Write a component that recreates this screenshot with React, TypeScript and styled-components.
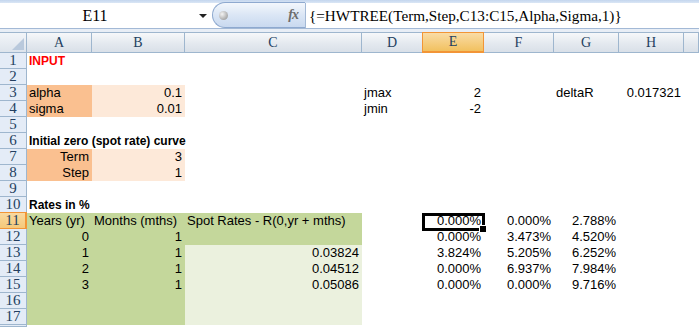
import styled, { createGlobalStyle, css } from 'styled-components'

const GlobalStyle = createGlobalStyle`
  html, body {
    margin: 0;
    padding: 0;
    background: #fff;
  }
  body {
    width: 699px;
    height: 327px;
    overflow: hidden;
    font-family: "Liberation Sans", Arial, sans-serif;
  }
`

const ORANGE = '#fac090'
const PEACH = '#fde9d9'
const GREEN = '#c4d79b'
const PALE = '#ebf1de'

type CellData = {
    v?: string
    right?: boolean
    bold?: boolean
    color?: string
    bg?: string
    selected?: boolean
}

const COLS: { id: string; w: number }[] = [
    { id: 'A', w: 65 },
    { id: 'B', w: 93 },
    { id: 'C', w: 177 },
    { id: 'D', w: 61 },
    { id: 'E', w: 61 },
    { id: 'F', w: 70 },
    { id: 'G', w: 65 },
    { id: 'H', w: 65 },
]

const ROW_COUNT = 17
const ACTIVE_COL = 'E'
const ACTIVE_ROW = 11

const n = (v: string, bg?: string): CellData => ({ v, right: true, bg })

const SHEET: Record<number, Record<string, CellData>> = {
    1: { A: { v: 'INPUT', bold: true, color: '#ff0000' } },
    3: {
        A: { v: 'alpha', bg: ORANGE },
        B: n('0.1', PEACH),
        D: { v: 'jmax' },
        E: n('2'),
        G: { v: 'deltaR' },
        H: n('0.017321'),
    },
    4: {
        A: { v: 'sigma', bg: ORANGE },
        B: n('0.01', PEACH),
        D: { v: 'jmin' },
        E: n('-2'),
    },
    6: { A: { v: 'Initial zero (spot rate) curve', bold: true } },
    7: { A: n('Term', ORANGE), B: n('3', PEACH) },
    8: { A: n('Step', ORANGE), B: n('1', PEACH) },
    10: { A: { v: 'Rates in %', bold: true } },
    11: {
        A: { v: 'Years (yr)', bg: GREEN },
        B: { v: 'Months (mths)', bg: GREEN },
        C: { v: 'Spot Rates - R(0,yr + mths)', bg: GREEN },
        E: { ...n('0.000%'), selected: true },
        F: n('0.000%'),
        G: n('2.788%'),
    },
    12: { A: n('0', GREEN), B: n('1', GREEN), C: { bg: GREEN }, E: n('0.000%'), F: n('3.473%'), G: n('4.520%') },
    13: { A: n('1', GREEN), B: n('1', GREEN), C: n('0.03824', PALE), E: n('3.824%'), F: n('5.205%'), G: n('6.252%') },
    14: { A: n('2', GREEN), B: n('1', GREEN), C: n('0.04512', PALE), E: n('0.000%'), F: n('6.937%'), G: n('7.984%') },
    15: { A: n('3', GREEN), B: n('1', GREEN), C: n('0.05086', PALE), E: n('0.000%'), F: n('0.000%'), G: n('9.716%') },
    16: { A: { bg: GREEN }, B: { bg: GREEN }, C: { bg: PALE } },
    17: { A: { bg: GREEN }, B: { bg: GREEN }, C: { bg: PALE } },
}

/* ---------- formula bar ---------- */

const TopStrip = styled.div`
    height: 3px;
    background: linear-gradient(#c4d6ee, #dae6f5);
`
const FormulaBar = styled.div`
    height: 25px;
    display: flex;
    background: #fff;
    border-bottom: 1px solid #a3b9d6;
`
const NameBox = styled.div`
    width: 212px;
    display: flex;
    align-items: center;
`
const NameText = styled.span`
    width: 190px;
    text-align: center;
    font-family: "Liberation Serif", "Times New Roman", serif;
    font-size: 16px;
    color: #000;
`
const DropArrow = styled.span`
    width: 0;
    height: 0;
    margin-left: 9px;
    border-left: 4px solid transparent;
    border-right: 4px solid transparent;
    border-top: 4px solid #222;
`
const FxPill = styled.div`
    width: 93px;
    box-sizing: border-box;
    margin-top: -1px;
    height: 26px;
    display: flex;
    align-items: center;
    justify-content: space-between;
    padding: 0 7px 0 6px;
    border: 1px solid #8ea9cf;
    border-right: none;
    border-radius: 13px 0 0 13px;
    background: linear-gradient(#f3f7fc, #dbe6f5 50%, #c9d9ef);
`
const Knob = styled.span`
    width: 9px;
    height: 9px;
    border-radius: 50%;
    background: radial-gradient(circle at 35% 35%, #f4f4f4, #a9a9a9 70%, #8d8d8d);
`
const FxLabel = styled.span`
    font-family: "Liberation Serif", "Times New Roman", serif;
    font-style: italic;
    font-weight: bold;
    font-size: 14px;
    color: #6d6d6d;
    letter-spacing: -1px;
`
const FormulaText = styled.div`
    flex: 1;
    border-left: 1px solid #a3b9d6;
    padding-left: 3px;
    font-family: "Liberation Serif", "Times New Roman", serif;
    font-size: 15.2px;
    line-height: 25px;
    color: #000;
    white-space: nowrap;
`
const Gap = styled.div`
    height: 3px;
    background: #e8eef6;
`

/* ---------- sheet ---------- */

const Sheet = styled.div`
    display: grid;
    grid-template-columns: 27px ${COLS.map((c) => `${c.w}px`).join(' ')} 1fr;
    grid-template-rows: 21px repeat(${ROW_COUNT}, 16px) 1fr;
    height: 295px;
`
const headText = css`
    font-family: "Liberation Serif", "Times New Roman", serif;
    color: #233f60;
    display: flex;
    align-items: center;
    justify-content: center;
    box-sizing: border-box;
`
const Corner = styled.div`
    position: relative;
    box-sizing: border-box;
    background: linear-gradient(#f2f5f9, #dde4ec);
    border-top: 1px solid #9eb6ce;
    border-right: 1px solid #9eb6ce;
    border-bottom: 1px solid #9eb6ce;
    &::after {
        content: '';
        position: absolute;
        right: 2px;
        bottom: 2px;
        border-left: 12px solid transparent;
        border-bottom: 12px solid #b9c9dc;
    }
`
const ColHead = styled.div<{ $active?: boolean }>`
    ${headText}
    font-size: 14px;
    border-top: 1px solid #9eb6ce;
    border-right: 1px solid #9eb6ce;
    border-bottom: 1px solid #9eb6ce;
    background: linear-gradient(#f6f8fa, #e4e9ef 55%, #d9e0e8);
    ${({ $active }) =>
        $active &&
        css`
            background: linear-gradient(#f9dca6, #f5cd7f 55%, #f1c15f);
            border-color: #f29536;
            border-left: 1px solid #f29536;
            margin-left: -1px;
            border-bottom-width: 2px;
        `}
`
const RowHead = styled.div<{ $active?: boolean }>`
    ${headText}
    font-size: 15px;
    background: #e4ecf7;
    border-right: 1px solid #9eb6ce;
    border-bottom: 1px solid #9eb6ce;
    ${({ $active }) =>
        $active &&
        css`
            background: linear-gradient(#f9d99f, #f5c97a);
            border-color: #f29536;
            border-top: 1px solid #f29536;
            margin-top: -1px;
            border-right-width: 2px;
        `}
`
const Cell = styled.div<{ $bg?: string; $right?: boolean; $bold?: boolean; $color?: string; $selected?: boolean }>`
    box-sizing: border-box;
    padding: 0 3px 0 2px;
    background: ${({ $bg }) => $bg ?? 'transparent'};
    font-size: ${({ $bold }) => ($bold ? '12px' : '13px')};
    line-height: 16px;
    font-weight: ${({ $bold }) => ($bold ? 'bold' : 'normal')};
    color: ${({ $color }) => $color ?? '#000'};
    text-align: ${({ $right }) => ($right ? 'right' : 'left')};
    white-space: nowrap;
    overflow: visible;
    ${({ $selected }) =>
        $selected &&
        css`
            position: relative;
            &::before {
                content: '';
                position: absolute;
                left: -1px;
                top: 0;
                right: -1px;
                bottom: -2px;
                border: 3px solid #000;
                z-index: 2;
            }
            &::after {
                content: '';
                position: absolute;
                right: -3px;
                bottom: -4px;
                width: 6px;
                height: 6px;
                background: #000;
                border: 1px solid #fff;
                z-index: 3;
            }
        `}
`

export default function App() {
    const rows = Array.from({ length: ROW_COUNT }, (_, i) => i + 1)
    return (
        <>
            <GlobalStyle />
            <TopStrip />
            <FormulaBar>
                <NameBox>
                    <NameText>E11</NameText>
                    <DropArrow />
                </NameBox>
                <FxPill>
                    <Knob />
                    <FxLabel>fx</FxLabel>
                </FxPill>
                <FormulaText>{'{=HWTREE(Term,Step,C13:C15,Alpha,Sigma,1)}'}</FormulaText>
            </FormulaBar>
            <Gap />
            <Sheet>
                <Corner />
                {COLS.map((c) => (
                    <ColHead key={c.id} $active={c.id === ACTIVE_COL}>
                        {c.id}
                    </ColHead>
                ))}
                <ColHead />
                {rows.map((r) => (
                    <RowCells key={r} row={r} />
                ))}
                <RowHead />
            </Sheet>
        </>
    )
}

function RowCells({ row }: { row: number }) {
    const data = SHEET[row] ?? {}
    return (
        <>
            <RowHead $active={row === ACTIVE_ROW}>{row}</RowHead>
            {COLS.map((c) => {
                const d = data[c.id] ?? {}
                return (
                    <Cell
                        key={c.id}
                        $bg={d.bg}
                        $right={d.right}
                        $bold={d.bold}
                        $color={d.color}
                        $selected={d.selected}
                    >
                        {d.v}
                    </Cell>
                )
            })}
            <Cell />
        </>
    )
}
